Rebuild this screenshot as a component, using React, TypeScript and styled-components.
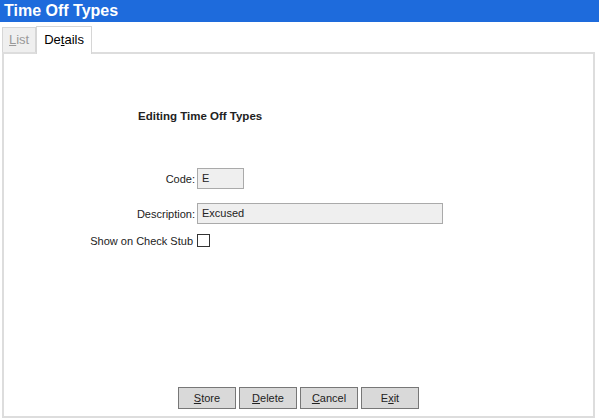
import styled, { createGlobalStyle } from "styled-components";

const GlobalStyle = createGlobalStyle`
	html, body {
		margin: 0;
		padding: 0;
		background: #fff;
		font-family: "Liberation Sans", Arial, sans-serif;
	}
`;

const Page = styled.div`
	display: flex;
	flex-direction: column;
	height: 420px;
	width: 599px;
	overflow: hidden;
`;

const TitleBar = styled.header`
	height: 22px;
	background: #1e6bdc;
	color: #fff;
	font-size: 16px;
	font-weight: bold;
	line-height: 22px;
	padding-left: 4px;
`;

const TabStrip = styled.div`
	display: flex;
	align-items: flex-end;
	height: 30px;
	padding-left: 2px;
`;

const Tab = styled.div<{ $active?: boolean }>`
	box-sizing: border-box;
	height: ${({ $active }) => ($active ? "28px" : "25px")};
	padding: 0 ${({ $active }) => ($active ? "7px" : "6px")};
	font-size: 13px;
	line-height: ${({ $active }) => ($active ? "26px" : "24px")};
	color: ${({ $active }) => ($active ? "#000" : "#999")};
	background: ${({ $active }) => ($active ? "#fff" : "#efefef")};
	border: 1px solid #d6d6d6;
	border-bottom: none;
	margin-bottom: ${({ $active }) => ($active ? "-2px" : "0")};
	position: relative;
	z-index: ${({ $active }) => ($active ? 1 : 0)};
`;

const Panel = styled.div`
	flex: 1;
	margin: 0 4px 2px 2px;
	border: 2px solid #ddd;
	display: flex;
	flex-direction: column;
	box-sizing: border-box;
`;

const Heading = styled.h2`
	margin: 56px 0 0 134px;
	font-size: 11.5px;
	font-weight: bold;
	color: #222;
`;

const Form = styled.div`
	display: grid;
	grid-template-columns: 193px auto;
	align-items: center;
	row-gap: 14px;
	margin-top: 46px;
	font-size: 11px;
	color: #222;
`;

const Label = styled.span`
	text-align: right;
	padding-right: 2px;
	white-space: nowrap;
`;

const Field = styled.div<{ $width: number }>`
	box-sizing: border-box;
	width: ${({ $width }) => $width}px;
	height: 21px;
	border: 1px solid #aaa;
	background: #efefef;
	font-size: 11px;
	line-height: 19px;
	padding-left: 4px;
`;

const Box = styled.span`
	box-sizing: border-box;
	display: block;
	width: 13px;
	height: 13px;
	margin-top: -4px;
	border: 1px solid #333;
	background: #fff;
`;

const CheckLabel = styled(Label)`
	margin-top: -4px;
	padding-right: 4px;
`;

const Buttons = styled.div`
	margin-top: auto;
	margin-bottom: 7px;
	display: flex;
	gap: 3px;
	padding-left: 174px;
`;

const Button = styled.button`
	box-sizing: border-box;
	width: 58px;
	height: 22px;
	padding: 0;
	background: #d9d9d9;
	border: 1px solid #777;
	font-family: "Liberation Sans", Arial, sans-serif;
	font-size: 11px;
	color: #222;
`;

function App() {
	return (
		<Page>
			<GlobalStyle />
			<TitleBar>Time Off Types</TitleBar>
			<TabStrip>
				<Tab>
					<u>L</u>ist
				</Tab>
				<Tab $active>
					De<u>t</u>ails
				</Tab>
			</TabStrip>
			<Panel>
				<Heading>Editing Time Off Types</Heading>
				<Form>
					<Label>Code:</Label>
					<Field $width={47}>E</Field>
					<Label>Description:</Label>
					<Field $width={246}>Excused</Field>
					<CheckLabel>Show on Check Stub</CheckLabel>
					<Box />
				</Form>
				<Buttons>
					<Button>
						<u>S</u>tore
					</Button>
					<Button>
						<u>D</u>elete
					</Button>
					<Button>
						<u>C</u>ancel
					</Button>
					<Button>
						E<u>x</u>it
					</Button>
				</Buttons>
			</Panel>
		</Page>
	);
}

export default App;
